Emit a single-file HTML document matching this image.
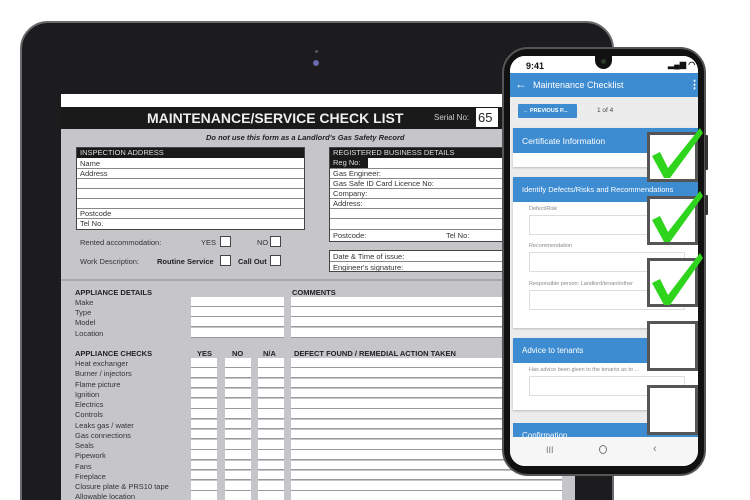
<!DOCTYPE html>
<html><head><meta charset="utf-8"><style>
*{margin:0;padding:0;box-sizing:border-box}
html,body{width:750px;height:500px;overflow:hidden}
body{background:#fff;position:relative;font-family:"Liberation Sans",Arial,sans-serif}
#w{position:absolute;left:0;top:0;width:750px;height:500px;overflow:hidden}
.a{position:absolute}
.t{position:absolute;font-size:7.5px;color:#333;white-space:nowrap;line-height:1}
.f{position:absolute;background:#fff;height:8.5px;box-shadow:0 1px 0 #9a9a9e}
.b{font-weight:bold}
.ph{position:absolute;font-family:"Liberation Sans",Arial,sans-serif;white-space:nowrap}
</style></head><body><div id="w">
<!-- tablet -->
<div class="a" style="left:20px;top:21px;width:594px;height:520px;border-radius:28px;background:#1c1c1e;border:2px solid #6a6a6e"></div>
<div class="a" style="left:315px;top:50px;width:3px;height:3px;border-radius:50%;background:#555"></div>
<div class="a" style="left:313px;top:60px;width:6px;height:6px;border-radius:50%;background:#6a6ab0"></div>
<div class="a" style="left:61px;top:94px;width:514px;height:420px;background:#c6c6ca"></div>
<div class="a" style="left:61px;top:94px;width:514px;height:13px;background:#fff"></div>
<div class="a" style="left:61px;top:107px;width:514px;height:22px;background:#1a1a1a"></div>
<div class="t b" style="left:147px;top:111px;font-size:14px;color:#eee">MAINTENANCE/SERVICE CHECK LIST</div>
<div class="t" style="left:434px;top:114px;font-size:8px;color:#ccc">Serial No:</div>
<div class="a" style="left:476px;top:108px;width:22px;height:19px;background:#fff"></div>
<div class="t" style="left:478px;top:111px;font-size:13px;color:#222">65</div>
<div class="t b" style="left:206px;top:134px;font-style:italic;font-size:7.5px;color:#222">Do not use this form as a Landlord's Gas Safety Record</div>

<div class="a" style="left:76px;top:147px;width:229px;height:83px;background:#fff;border:1px solid #444"></div>
<div class="a" style="left:77px;top:148px;width:227px;height:10px;background:#1a1a1a"></div>
<div class="t" style="left:80px;top:149px;color:#ddd">INSPECTION ADDRESS</div>
<div class="a" style="left:77px;top:168px;width:227px;height:1px;background:#888"></div>
<div class="a" style="left:77px;top:178px;width:227px;height:1px;background:#888"></div>
<div class="a" style="left:77px;top:188px;width:227px;height:1px;background:#888"></div>
<div class="a" style="left:77px;top:198px;width:227px;height:1px;background:#888"></div>
<div class="a" style="left:77px;top:208px;width:227px;height:1px;background:#888"></div>
<div class="a" style="left:77px;top:218px;width:227px;height:1px;background:#888"></div>
<div class="t" style="left:80px;top:160px">Name</div>
<div class="t" style="left:80px;top:170px">Address</div>
<div class="t" style="left:80px;top:210px">Postcode</div>
<div class="t" style="left:80px;top:220px">Tel No.</div>

<div class="t" style="left:80px;top:239px">Rented accommodation:</div>
<div class="t" style="left:201px;top:239px">YES</div>
<div class="a" style="left:220px;top:236px;width:11px;height:11px;background:#fff;border:1px solid #444"></div>
<div class="t" style="left:257px;top:239px">NO</div>
<div class="a" style="left:270px;top:236px;width:11px;height:11px;background:#fff;border:1px solid #444"></div>
<div class="t" style="left:80px;top:258px">Work Description:</div>
<div class="t b" style="left:157px;top:258px;color:#222">Routine Service</div>
<div class="a" style="left:220px;top:255px;width:11px;height:11px;background:#fff;border:1px solid #444"></div>
<div class="t b" style="left:238px;top:258px;color:#222">Call Out</div>
<div class="a" style="left:270px;top:255px;width:11px;height:11px;background:#fff;border:1px solid #444"></div>

<div class="a" style="left:329px;top:147px;width:240px;height:95px;background:#fff;border:1px solid #444"></div>
<div class="a" style="left:330px;top:148px;width:238px;height:10px;background:#1a1a1a"></div>
<div class="t" style="left:333px;top:149px;color:#ddd">REGISTERED BUSINESS DETAILS</div>
<div class="a" style="left:330px;top:158px;width:38px;height:10px;background:#1a1a1a"></div>
<div class="t" style="left:333px;top:159px;color:#ddd">Reg No:</div>
<div class="a" style="left:330px;top:168px;width:238px;height:1px;background:#888"></div>
<div class="a" style="left:330px;top:178px;width:238px;height:1px;background:#888"></div>
<div class="a" style="left:330px;top:188px;width:238px;height:1px;background:#888"></div>
<div class="a" style="left:330px;top:198px;width:238px;height:1px;background:#888"></div>
<div class="a" style="left:330px;top:208px;width:238px;height:1px;background:#888"></div>
<div class="a" style="left:330px;top:218px;width:238px;height:1px;background:#888"></div>
<div class="a" style="left:330px;top:229px;width:238px;height:1px;background:#888"></div>
<div class="t" style="left:333px;top:170px">Gas Engineer:</div>
<div class="t" style="left:333px;top:180px">Gas Safe ID Card Licence No:</div>
<div class="t" style="left:333px;top:190px">Company:</div>
<div class="t" style="left:333px;top:200px">Address:</div>
<div class="t" style="left:333px;top:232px">Postcode:</div>
<div class="t" style="left:446px;top:232px">Tel No:</div>
<div class="a" style="left:329px;top:250px;width:240px;height:22px;background:#fff;border:1px solid #444"></div>
<div class="a" style="left:330px;top:261px;width:238px;height:1px;background:#888"></div>
<div class="t" style="left:333px;top:253px">Date &amp; Time of issue:</div>
<div class="t" style="left:333px;top:264px">Engineer's signature:</div>
<div class="a" style="left:61px;top:279px;width:514px;height:2px;background:#a8a8ac"></div>

<div class="t b" style="left:75px;top:289px;color:#222">APPLIANCE DETAILS</div>
<div class="t b" style="left:292px;top:289px;color:#222">COMMENTS</div>
<div class="t" style="left:75px;top:299px">Make</div>
<div class="t" style="left:75px;top:309px">Type</div>
<div class="t" style="left:75px;top:319px">Model</div>
<div class="t" style="left:75px;top:330px">Location</div>
<div class="f" style="left:191px;top:297px;width:93px"></div><div class="f" style="left:291px;top:297px;width:271px"></div>
<div class="f" style="left:191px;top:307px;width:93px"></div><div class="f" style="left:291px;top:307px;width:271px"></div>
<div class="f" style="left:191px;top:317px;width:93px"></div><div class="f" style="left:291px;top:317px;width:271px"></div>
<div class="f" style="left:191px;top:328px;width:93px"></div><div class="f" style="left:291px;top:328px;width:271px"></div>

<div class="t b" style="left:75px;top:350px;color:#222">APPLIANCE CHECKS</div>
<div class="t b" style="left:197px;top:350px;color:#222">YES</div>
<div class="t b" style="left:232px;top:350px;color:#222">NO</div>
<div class="t b" style="left:263px;top:350px;color:#222">N/A</div>
<div class="t b" style="left:294px;top:350px;color:#222">DEFECT FOUND / REMEDIAL ACTION TAKEN</div>
<div id="rows"></div>
<script>
var n=["Heat exchanger","Burner / injectors","Flame picture","Ignition","Electrics","Controls","Leaks gas / water","Gas connections","Seals","Pipework","Fans","Fireplace","Closure plate & PRS10 tape","Allowable location"];
var h="";for(var i=0;i<14;i++){var y=358+i*10.25;
h+='<div class="t" style="left:75px;top:'+(y+2)+'px">'+n[i].replace("&","&amp;")+'</div>';
[[191,26],[225,26],[258,26],[291,271]].forEach(function(c){h+='<div class="f" style="left:'+c[0]+'px;top:'+y+'px;width:'+c[1]+'px"></div>';});}
document.getElementById("rows").outerHTML=h;
</script>

<!-- phone -->
<div class="a" style="left:502px;top:47px;width:204px;height:429px;border-radius:26px;background:#111;border:2px solid #555"></div>
<div class="a" style="left:705px;top:135px;width:3px;height:35px;background:#333;border-radius:1px"></div>
<div class="a" style="left:705px;top:195px;width:3px;height:20px;background:#333;border-radius:1px"></div>
<div class="a" style="left:510px;top:56px;width:188px;height:410px;border-radius:15px;background:#ececec;overflow:hidden">
 <div class="a" style="left:0;top:0;width:188px;height:17px;background:#fff"></div>
 <div class="ph b" style="left:16px;top:5px;font-size:9px;color:#111">9:41</div>
 <div class="a" style="left:85px;top:0;width:17px;height:13px;border-radius:0 0 9px 9px;background:#111"></div>
 <div class="a" style="left:91px;top:3px;width:5px;height:5px;border-radius:50%;background:#2a3a2a"></div>
 <div class="ph b" style="left:158px;top:4px;font-size:8px;color:#111">▂▄▆ ◠ ▬</div>
 <div class="a" style="left:0;top:17px;width:188px;height:24px;background:#3d8bd0"></div>
 <div class="ph" style="left:5px;top:21px;font-size:12px;color:#fff">←</div>
 <div class="ph" style="left:23px;top:24px;font-size:9px;color:#fff">Maintenance Checklist</div>
 <div class="ph b" style="left:179px;top:22px;font-size:11px;color:#fff">⋮</div>
 <div class="a" style="left:8px;top:48px;width:59px;height:14px;background:#3d8bd0;border-radius:1px"></div>
 <div class="ph b" style="left:13px;top:52px;font-size:5.5px;color:#fff">← PREVIOUS P...</div>
 <div class="ph" style="left:87px;top:51px;font-size:6.5px;color:#444">1 of 4</div>

 <div class="a" style="left:3px;top:72px;width:185px;height:39px;background:#fff;box-shadow:0 1px 2px #bbb"></div>
 <div class="a" style="left:3px;top:72px;width:185px;height:25px;background:#3d8bd0"></div>
 <div class="ph" style="left:12px;top:80px;font-size:8.5px;color:#fff">Certificate Information</div>

 <div class="a" style="left:3px;top:121px;width:185px;height:151px;background:#fff;box-shadow:0 1px 2px #bbb"></div>
 <div class="a" style="left:3px;top:121px;width:185px;height:25px;background:#3d8bd0"></div>
 <div class="ph" style="left:12px;top:129px;font-size:7.5px;color:#fff">Identify Defects/Risks and Recommendations</div>
 <div class="ph" style="left:19px;top:150px;font-size:5.5px;color:#888">Defect/Risk</div>
 <div class="a" style="left:19px;top:159px;width:156px;height:20px;border:1px solid #ddd"></div>
 <div class="ph" style="left:19px;top:187px;font-size:5.5px;color:#888">Recommendation</div>
 <div class="a" style="left:19px;top:196px;width:156px;height:20px;border:1px solid #ddd"></div>
 <div class="ph" style="left:19px;top:225px;font-size:5.5px;color:#888">Responsible person: Landlord/tenant/other</div>
 <div class="a" style="left:19px;top:234px;width:156px;height:20px;border:1px solid #ddd"></div>

 <div class="a" style="left:3px;top:282px;width:185px;height:72px;background:#fff;box-shadow:0 1px 2px #bbb"></div>
 <div class="a" style="left:3px;top:282px;width:185px;height:25px;background:#3d8bd0"></div>
 <div class="ph" style="left:12px;top:290px;font-size:8px;color:#fff">Advice to tenants</div>
 <div class="ph" style="left:19px;top:311px;font-size:5.5px;color:#888">Has advice been given to the tenants as to ...</div>
 <div class="a" style="left:19px;top:320px;width:156px;height:20px;border:1px solid #ddd"></div>

 <div class="a" style="left:3px;top:367px;width:185px;height:25px;background:#3d8bd0"></div>
 <div class="ph" style="left:12px;top:375px;font-size:8px;color:#fff">Confirmation</div>
 <div class="a" style="left:0;top:381px;width:188px;height:29px;background:#f6f6f6"></div>
 <div class="ph" style="left:36px;top:389px;font-size:9px;color:#777">III</div>
 <div class="a" style="left:89px;top:389px;width:8px;height:9px;border:1px solid #777;border-radius:50%"></div>
 <div class="ph" style="left:143px;top:387px;font-size:11px;color:#777">‹</div>
</div>

<div class="a" style="left:647px;top:132px;width:51px;height:50px;background:#fff;border:3px solid #555"></div>
<div class="a" style="left:647px;top:196px;width:51px;height:49px;background:#fff;border:3px solid #555"></div>
<div class="a" style="left:647px;top:258px;width:51px;height:49px;background:#fff;border:3px solid #555"></div>
<div class="a" style="left:647px;top:321px;width:51px;height:50px;background:#fff;border:3px solid #555"></div>
<div class="a" style="left:647px;top:385px;width:51px;height:50px;background:#fff;border:3px solid #555"></div>
<svg class="a" style="left:0;top:0" width="750" height="500">
<g fill="#2fd41c">
<path d="M652 156 L660 152 L668 168 L700 128 L703 133 L670 178 L664 178 Z"/>
<path d="M652 220 L660 216 L668 232 L700 191 L703 196 L670 242 L664 242 Z"/>
<path d="M652 283 L660 279 L668 295 L700 253 L703 258 L670 305 L664 305 Z"/>
</g></svg>
</div></body></html>
